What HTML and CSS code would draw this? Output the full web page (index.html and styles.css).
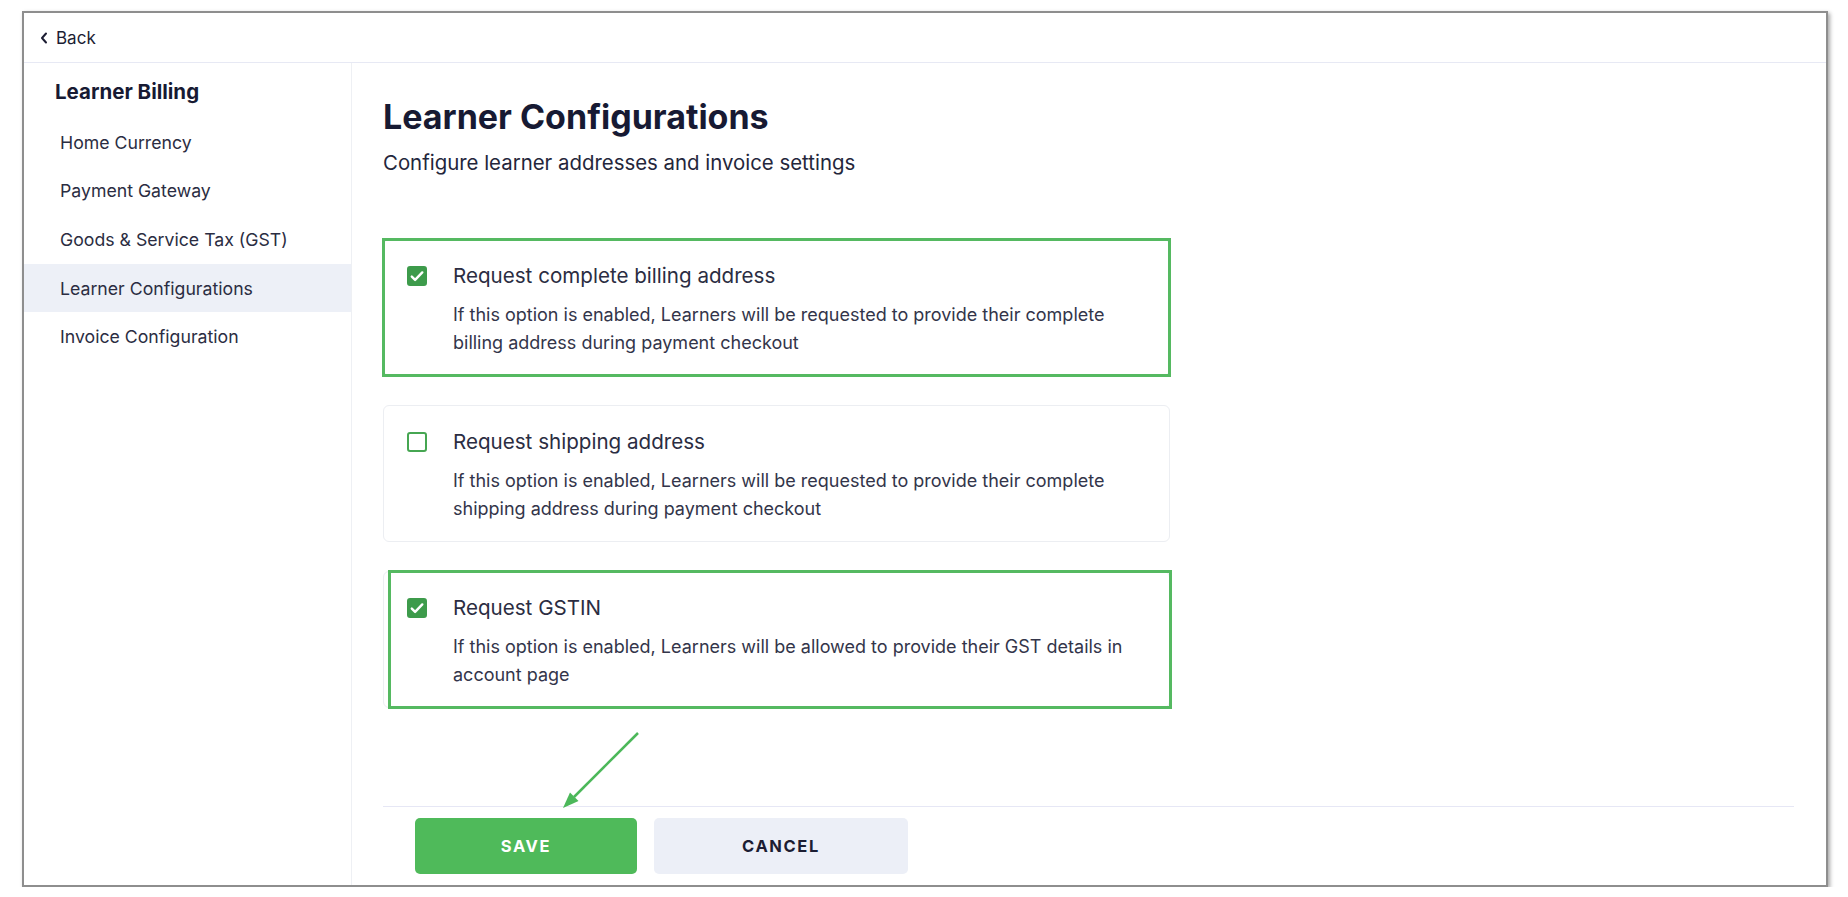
FILE: index.html
```html
<!DOCTYPE html>
<html lang="en">
<head>
    <meta charset="UTF-8">
    <meta name="viewport" content="width=device-width, initial-scale=1.0">
    <title>Learner Configurations</title>
    <link rel="stylesheet" href="styles.css">
</head>
<body>
    <div class="frame">
        <div class="topbar">
            <a class="back-link" href="#">
                <svg class="back-icon" viewBox="0 0 8 12" width="8" height="12">
                    <path d="M6 1.5L2 6l4 4.5" fill="none" stroke="#1c1d33" stroke-width="2" stroke-linecap="round" stroke-linejoin="round"/>
                </svg>
                Back
            </a>
        </div>

        <div class="layout">
            <!-- Sidebar -->
            <div class="sidebar">
                <div class="sidebar-title">Learner Billing</div>
                <div class="nav-item">Home Currency</div>
                <div class="nav-item">Payment Gateway</div>
                <div class="nav-item">Goods &amp; Service Tax (GST)</div>
                <div class="nav-item active">Learner Configurations</div>
                <div class="nav-item">Invoice Configuration</div>
            </div>

            <!-- Main content -->
            <div class="main">
                <h1 class="page-title">Learner Configurations</h1>
                <div class="page-subtitle">Configure learner addresses and invoice settings</div>

                <div class="options">
                    <div class="option-card">
                        <span class="checkbox checked">
                            <svg viewBox="0 0 16 16" width="16" height="16"><path d="M2.8 8.6l3.3 3.3L13.3 4.4" fill="none" stroke="#fff" stroke-width="2.4" stroke-linecap="round" stroke-linejoin="round"/></svg>
                        </span>
                        <div class="option-text">
                            <div class="option-title">Request complete billing address</div>
                            <div class="option-desc">If this option is enabled, Learners will be requested to provide their complete billing address during payment checkout</div>
                        </div>
                        <div class="mark mark-first"></div>
                    </div>

                    <div class="option-card">
                        <span class="checkbox"></span>
                        <div class="option-text">
                            <div class="option-title">Request shipping address</div>
                            <div class="option-desc">If this option is enabled, Learners will be requested to provide their complete shipping address during payment checkout</div>
                        </div>
                    </div>

                    <div class="option-card">
                        <span class="checkbox checked">
                            <svg viewBox="0 0 16 16" width="16" height="16"><path d="M2.8 8.6l3.3 3.3L13.3 4.4" fill="none" stroke="#fff" stroke-width="2.4" stroke-linecap="round" stroke-linejoin="round"/></svg>
                        </span>
                        <div class="option-text">
                            <div class="option-title">Request GSTIN</div>
                            <div class="option-desc">If this option is enabled, Learners will be allowed to provide their GST details in account page</div>
                        </div>
                        <div class="mark mark-last"></div>
                    </div>
                </div>

                <svg class="pointer-arrow" viewBox="0 0 90 90" width="90" height="90">
                    <path d="M81 5L17 69" stroke="#4cb85a" stroke-width="2.5" fill="none"/>
                    <path d="M6 80L13 64.5L21.5 73Z" fill="#4cb85a"/>
                </svg>

                <div class="footer">
                    <button class="btn btn-save">SAVE</button>
                    <button class="btn btn-cancel">CANCEL</button>
                </div>
            </div>
        </div>
    </div>
</body>
</html>
```

FILE: styles.css
```css
/* Global */
body {
    margin: 0;
    padding: 0;
    background-color: #fff;
    font-family: Inter, "Noto Sans", sans-serif;
    color: #1c1d33;
}

/* Screenshot frame */
.frame {
    box-sizing: border-box;
    width: 1806px;
    height: 876px;
    margin: 11px 0 0 22px;
    border: 2px solid #8e8e8e;
    box-shadow: 2px 2px 4px rgba(0, 0, 0, 0.35);
    display: flex;
    flex-direction: column;
    background-color: #fff;
}

/* Top bar */
.topbar {
    height: 49px;
    border-bottom: 1px solid #e7e9f4;
    display: flex;
    align-items: center;
    padding-left: 16px;
    flex-shrink: 0;
}

.back-link {
    display: flex;
    align-items: center;
    gap: 8px;
    color: #1c1d33;
    text-decoration: none;
    font-size: 17px;
}

/* Layout */
.layout {
    flex: 1;
    display: flex;
    min-height: 0;
}

/* Sidebar */
.sidebar {
    width: 327px;
    flex-shrink: 0;
    border-right: 1px solid #eef0f4;
    padding-top: 14px;
}

.sidebar-title {
    font-size: 20.5px;
    font-weight: 700;
    color: #171a33;
    line-height: 30px;
    padding-left: 31px;
    margin-bottom: 11px;
}

.nav-item {
    height: 48.6px;
    display: flex;
    align-items: center;
    padding-left: 36px;
    font-size: 17.7px;
    color: #2b2d42;
}

.nav-item.active {
    background-color: #edf0f7;
}

/* Main */
.main {
    flex: 1;
    position: relative;
    display: flex;
    flex-direction: column;
    padding: 32px 32px 0 31px;
}

.page-title {
    margin: 0;
    font-size: 34px;
    line-height: 44px;
    font-weight: 700;
    color: #171a33;
}

.page-subtitle {
    margin-top: 10px;
    font-size: 20.4px;
    line-height: 28px;
    color: #24263b;
}

.options {
    margin-top: 62px;
    display: flex;
    flex-direction: column;
    gap: 29px;
    width: 787px;
}

.option-card {
    position: relative;
    box-sizing: border-box;
    height: 137px;
    border: 1px solid #eceef2;
    border-radius: 6px;
    display: flex;
    gap: 26px;
    padding: 24px 20px 0 23px;
}

.checkbox {
    box-sizing: border-box;
    width: 20px;
    height: 20px;
    margin-top: 2px;
    border: 2px solid #46a652;
    border-radius: 3px;
    flex-shrink: 0;
    display: flex;
    align-items: center;
    justify-content: center;
}

.checkbox.checked {
    background-color: #3d9b4b;
    border-color: #3d9b4b;
}

.option-title {
    font-size: 20.6px;
    line-height: 24px;
    color: #2b2d42;
}

.option-desc {
    margin-top: 13px;
    font-size: 18px;
    line-height: 28px;
    color: #33354a;
    max-width: 700px;
}

/* Green highlight boxes drawn over the cards */
.mark {
    position: absolute;
    border: 3px solid #55b961;
    pointer-events: none;
}

.mark-first {
    top: -2px;
    left: -2px;
    right: -2px;
    bottom: -2px;
}

.mark-last {
    top: -2px;
    left: 4px;
    right: -3px;
    bottom: -2px;
}

.pointer-arrow {
    position: absolute;
    left: 205px;
    top: 665px;
}

/* Footer */
.footer {
    margin-top: auto;
    border-top: 1px solid #e6e7f5;
    padding: 11px 0 11px 32px;
    display: flex;
    gap: 17px;
}

.btn {
    height: 56px;
    border: none;
    border-radius: 5px;
    font-family: Inter, "Noto Sans", sans-serif;
    font-size: 16.5px;
    font-weight: 700;
    letter-spacing: 1.6px;
    cursor: pointer;
}

.btn-save {
    width: 222px;
    background-color: #4fba5a;
    color: #fff;
}

.btn-cancel {
    width: 254px;
    background-color: #eceff7;
    color: #1c1d33;
}
```
